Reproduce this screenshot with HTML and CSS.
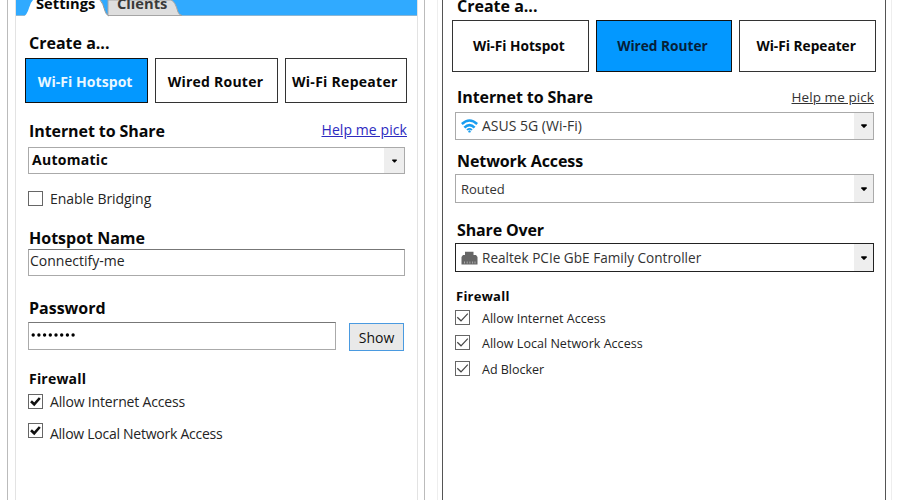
FILE: index.html
```html
<!DOCTYPE html>
<html lang="en">
<head>
<meta charset="utf-8">
<title>Hotspot settings</title>
<link rel="stylesheet" href="styles.css">
</head>
<body>
<svg class="defs" width="0" height="0">
  <symbol id="arrow" viewBox="0 0 6 4"><path d="M0.3 0.3h5.4v0.9L3.6 3.7H2.4L0.3 1.2z"/></symbol>
  <symbol id="tick-bold" viewBox="0 0 15 15"><path d="M3 7.2 6.2 10.3 11.8 4" fill="none" stroke="#111" stroke-width="2.6"/></symbol>
  <symbol id="tick-thin" viewBox="0 0 15 15"><path d="M2.3 7.3 6 10.8 12.8 3.6" fill="none" stroke="#444" stroke-width="1.2"/></symbol>
</svg>
<main class="screens">
  <section class="window window-hotspot">
    <div class="panel">
      <nav class="tabs">
        <svg class="tab-shapes" width="401" height="17" viewBox="0 0 401 17">
          <path d="M0 15.5H401" stroke="#8cb6d4"/>
          <path d="M92 0H155Q159 1 162 12Q163 15 166 15.5H92z" fill="#dedede" stroke="#a5a5a5"/>
          <path d="M7 17Q11 15 13 8Q15 0 20 -2H82Q86 0 88 8Q90 15 94 17z" fill="#fff"/>
          <path d="M84 0Q87 3 89 11Q90 15 93 16" fill="none" stroke="#999"/>
        </svg>
        <span class="tab tab-settings">Settings</span>
        <span class="tab tab-clients">Clients</span>
      </nav>
      <div class="form">
        <h2 class="heading create">Create a...</h2>
        <div class="modes">
          <button class="mode active">Wi-Fi Hotspot</button>
          <button class="mode wired">Wired Router</button>
          <button class="mode repeater">Wi-Fi Repeater</button>
        </div>
        <div class="label-row"><h2 class="heading">Internet to Share</h2><a class="help">Help me pick</a></div>
        <div class="select automatic"><span>Automatic</span><i class="drop"><svg width="5" height="4"><use href="#arrow"/></svg></i></div>
        <label class="check bridging"><i class="box"></i><span>Enable Bridging</span></label>
        <h2 class="heading name">Hotspot Name</h2>
        <div class="input"><span>Connectify-me</span></div>
        <h2 class="heading password">Password</h2>
        <div class="password-row">
          <div class="input secret"><svg width="46" height="6" viewBox="0 0 46 6"><path d="M2.2 3h40.5" stroke="#000" stroke-width="3.4" stroke-linecap="round" stroke-dasharray="0 5.7"/></svg></div>
          <button class="show">Show</button>
        </div>
        <h3 class="heading firewall">Firewall</h3>
        <label class="check internet"><i class="box"><svg width="15" height="15"><use href="#tick-bold"/></svg></i><span>Allow Internet Access</span></label>
        <label class="check local"><i class="box"><svg width="15" height="15"><use href="#tick-bold"/></svg></i><span>Allow Local Network Access</span></label>
      </div>
    </div>
  </section>
  <section class="window-router">
    <div class="form">
      <h2 class="heading create">Create a...</h2>
      <div class="modes">
        <button class="mode">Wi-Fi Hotspot</button>
        <button class="mode active">Wired Router</button>
        <button class="mode">Wi-Fi Repeater</button>
      </div>
      <div class="label-row"><h2 class="heading">Internet to Share</h2><a class="help">Help me pick</a></div>
      <div class="select source">
        <svg class="icon" width="17" height="14" viewBox="0 0 17 14" fill="none" stroke="#189df0" stroke-width="2.6"><path d="M.8 5Q8.5-2 16.2 5"/><path d="M3.4 8.6Q8.5 3.6 13.6 8.6"/><path d="M5.9 11Q8.5 8.8 11.1 11" stroke-width="1.6"/><circle cx="8.5" cy="12.4" r="1.2" fill="#189df0" stroke="none"/></svg>
        <span>ASUS 5G (Wi-Fi)</span><i class="drop"><svg width="6" height="4"><use href="#arrow"/></svg></i>
      </div>
      <h2 class="heading access">Network Access</h2>
      <div class="select routed"><span>Routed</span><i class="drop"><svg width="6" height="4"><use href="#arrow"/></svg></i></div>
      <h2 class="heading over">Share Over</h2>
      <div class="select adapter">
        <svg class="icon" width="17" height="14" viewBox="0 0 17 14"><path d="M4 .8H12.5V4H15L16.5 6V13.5H.5V6L2 4H4z" fill="#666"/><path d="M3.5 10.5v2M6.2 10.5v2M8.9 10.5v2M11.6 10.5v2M14 10.5v2" stroke="#aaa"/></svg>
        <span>Realtek PCIe GbE Family Controller</span><i class="drop"><svg width="6" height="4"><use href="#arrow"/></svg></i>
      </div>
      <h3 class="heading firewall">Firewall</h3>
      <label class="check internet"><i class="box"><svg width="15" height="15"><use href="#tick-thin"/></svg></i><span>Allow Internet Access</span></label>
      <label class="check local"><i class="box"><svg width="15" height="15"><use href="#tick-thin"/></svg></i><span>Allow Local Network Access</span></label>
      <label class="check blocker"><i class="box"><svg width="15" height="15"><use href="#tick-thin"/></svg></i><span>Ad Blocker</span></label>
    </div>
  </section>
</main>
</body>
</html>
```

FILE: styles.css
```css
* { box-sizing: border-box; }
body { margin: 0; background: #fff; color: #080808; font-family: "Open Sans", sans-serif; overflow: hidden; }
.defs { display: none; }
.screens { display: flex; height: 500px; overflow: hidden; }
.window { width: 418px; margin-left: 7px; padding: 0 6px 0 7px; border: solid #bbb; border-width: 0 1px; }
.panel { width: 403px; height: 500px; border: solid #e3e3e3; border-width: 0 1px; }
.window-router { width: 455px; margin-left: 12px; height: 500px; border: solid #eee; border-width: 0 1px; padding: 0 5px 0 4px; }
.window-router .form { width: 444px; height: 500px; border: solid #555; border-width: 0 1px; overflow: hidden; padding: 0 11px 0 12px; }
.tabs { position: relative; display: flex; height: 16px; background: #30aaff; }
.tab-shapes { position: absolute; left: 0; top: 0; }
.tab { position: relative; font-size: 14.7px; font-weight: 700; line-height: 20px; margin-top: -7px; height: 20px; white-space: nowrap; }
.tab-settings { margin-left: 20px; width: 81px; }
.tab-clients { color: #3a3a3a; }
.window .form { padding: 0 12px; }
.heading { margin: 0; font-size: 16px; font-weight: 700; line-height: 22px; height: 22px; white-space: nowrap; padding-left: 1px; }
.window .create { margin-top: 15px; height: 24px; line-height: 24px; }
.modes { display: flex; gap: 7px; }
.window .modes { margin: 3px -2px 0 -3px; height: 45px; }
.mode { flex: 1; padding: 0; border: 1px solid #333; background: #fff; color: #080808; font: 700 14px "Open Sans", sans-serif; white-space: nowrap; }
.window .mode { padding: 2px 2px 0 0; }
.mode.active { background: #0398ff; border-color: #111; }
.window .mode.active { color: #e9f7ff; letter-spacing: .06px; padding-right: 3px; }
.window .wired { letter-spacing: .23px; }
.window .repeater { letter-spacing: .28px; }
.label-row { display: flex; justify-content: space-between; }
.window .label-row { margin: 17px -2px 0 0; height: 23px; }
.label-row .heading { letter-spacing: -.08px; }
.help { font-size: 14px; line-height: 21px; text-decoration: underline; white-space: nowrap; letter-spacing: .08px; }
.window .help { color: #2d2bc0; line-height: 20px; }
.select { display: flex; align-items: center; border: 1px solid #aaa; white-space: nowrap; }
.select .icon { margin-right: 4px; }
.drop { display: flex; align-items: center; justify-content: center; width: 20px; height: 100%; margin-left: auto; background: #eee; }
.window .automatic { width: 377px; height: 27px; margin-top: 4px; padding-left: 3px; font-size: 14px; font-weight: 700; letter-spacing: .28px; }
.automatic span { margin-top: -2px; }
.check { display: flex; align-items: center; height: 20px; white-space: nowrap; color: #242424; }
.box { display: flex; flex: none; width: 15px; height: 15px; border: 1px solid #666; }
.box svg { margin: -1px; }
.window .check { font-size: 14px; gap: 7px; }
.window .check span { margin-top: -1px; }
.window .bridging { margin-top: 15px; letter-spacing: -.05px; }
.window .bridging span { margin-top: -2px; }
.window .bridging .box { margin-top: -1px; }
.window .name { margin-top: 18px; }
.input { width: 377px; height: 27px; border: 1px solid #aaa; border-top-color: #777; font-size: 14px; line-height: 22px; padding-left: 1px; color: #242424; }
.window .password { margin-top: 21px; }
.password-row { display: flex; justify-content: space-between; width: 376px; height: 29px; margin-top: 4px; }
.secret { width: 308px; display: flex; align-items: center; padding-left: 2px; margin-top: -1px; height: 28px; }
.secret svg { margin-top: -2px; }
.show { width: 55px; height: 28px; padding: 0; border: 1px solid #4a9ae0; background: #e9e9e9; font: 14px "Open Sans", sans-serif; color: #111; }
.window .firewall { margin-top: 17px; height: 19px; line-height: 19px; font-size: 14px; letter-spacing: .2px; padding-left: 1px; }
.window .internet { margin-top: 4px; letter-spacing: -.16px; }
.window .internet .box { margin-top: -1px; }
.window .local { margin-top: 11px; letter-spacing: -.26px; }
.window .local .box { margin-top: -5px; }
.window .local span { margin-top: 1px; }
.window-router .create { margin-top: -6px; height: 24px; line-height: 24px; }
.window-router .heading { padding-left: 2px; }
.window-router .modes { margin: 2px -2px 0 -3px; height: 52px; }
.window-router .mode { font-size: 13.7px; padding: 0 3px 1px 0; }
.window-router .mode.active { color: #062039; }
.window-router .label-row { margin-top: 14px; height: 23px; }
.window-router .help { font-size: 13.5px; line-height: 22px; color: #333; }
.window-router .select { font-size: 13px; color: #333; padding-left: 5px; width: 419px; }
.window-router .drop { width: 19px; }
.window-router .source { margin-top: 3px; height: 28px; font-size: 14px; }
.window-router .source span { margin-top: -1px; }
.window-router .access { margin-top: 10px; letter-spacing: -.08px; }
.window-router .routed { margin-top: 2px; height: 29px; }
.window-router .over { margin-top: 16px; letter-spacing: -.15px; }
.window-router .adapter { margin-top: 2px; height: 29px; border-color: #222; font-size: 13.6px; }
.window-router .firewall { margin-top: 14px; height: 20px; line-height: 20px; font-size: 13px; letter-spacing: .25px; padding-left: 1px; }
.window-router .check { font-size: 12.5px; gap: 12px; }
.window-router .box { margin-top: -2px; }
.window-router .internet { margin-top: 2px; }
.window-router .local { margin-top: 5px; letter-spacing: .03px; }
.window-router .blocker { margin-top: 6px; }
```
